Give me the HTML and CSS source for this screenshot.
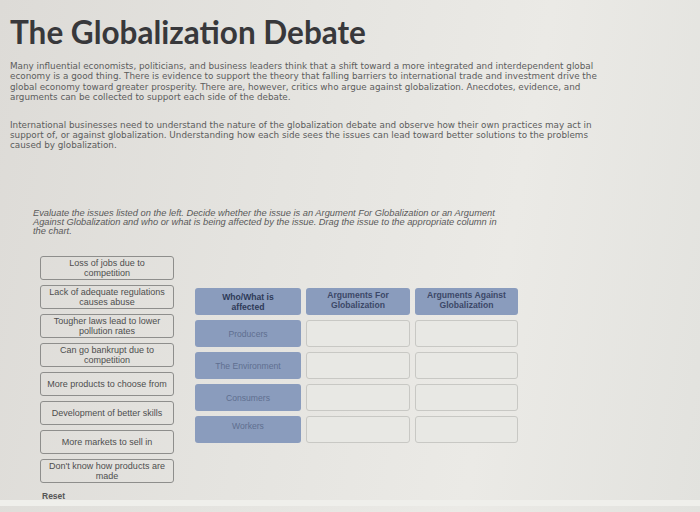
FILE: index.html
```html
<!DOCTYPE html>
<html>
<head>
<meta charset="utf-8">
<link rel="stylesheet" href="styles.css">
</head>
<body>
<div class="page">
  <h1 class="title">The Globalization Debate</h1>
  <p class="intro">Many influential economists, politicians, and business leaders think that a shift toward a more integrated and interdependent global<br>economy is a good thing. There is evidence to support the theory that falling barriers to international trade and investment drive the<br>global economy toward greater prosperity. There are, however, critics who argue against globalization. Anecdotes, evidence, and<br>arguments can be collected to support each side of the debate.</p>
  <p class="intro second">International businesses need to understand the nature of the globalization debate and observe how their own practices may act in<br>support of, or against globalization. Understanding how each side sees the issues can lead toward better solutions to the problems<br>caused by globalization.</p>
  <p class="instructions">Evaluate the issues listed on the left. Decide whether the issue is an Argument For Globalization or an Argument<br>Against Globalization and who or what is being affected by the issue. Drag the issue to the appropriate column in<br>the chart.</p>

  <div class="activity">
    <div class="issues">
      <div class="issue">Loss of jobs due to<br>competition</div>
      <div class="issue">Lack of adequate regulations<br>causes abuse</div>
      <div class="issue">Tougher laws lead to lower<br>pollution rates</div>
      <div class="issue">Can go bankrupt due to<br>competition</div>
      <div class="issue">More products to choose from</div>
      <div class="issue">Development of better skills</div>
      <div class="issue">More markets to sell in</div>
      <div class="issue">Don't know how products are<br>made</div>
      <div class="reset">Reset</div>
    </div>
    <div class="chart">
      <div class="head">Who/What is<br>affected</div>
      <div class="head top">Arguments For<br>Globalization</div>
      <div class="head top">Arguments Against<br>Globalization</div>

      <div class="label">Producers</div>
      <div class="drop"></div>
      <div class="drop"></div>

      <div class="label">The Environment</div>
      <div class="drop"></div>
      <div class="drop"></div>

      <div class="label">Consumers</div>
      <div class="drop"></div>
      <div class="drop"></div>

      <div class="label top">Workers</div>
      <div class="drop"></div>
      <div class="drop"></div>
    </div>
  </div>
</div>
</body>
</html>
```
FILE: styles.css
```css
html, body {
  margin: 0;
  padding: 0;
}
body {
  width: 700px;
  height: 512px;
  overflow: hidden;
  background: linear-gradient(100deg, #dddbd7 0%, #e5e4e0 40%, #ebeae6 70%, #e2e2de 100%);
  font-family: "Liberation Sans", Arial, sans-serif;
  color: #444;
}
.page {
  height: 506px;
  padding-left: 10px;
  box-sizing: border-box;
  border-bottom: 6px solid #efefeb;
}
.title {
  margin: 0;
  padding-top: 14px;
  font-family: Lato, "Liberation Sans", sans-serif;
  font-weight: 700;
  font-size: 31.5px;
  line-height: 36px;
  color: #38383b;
}
.intro {
  margin: 11px 0 0 0;
  font-family: "DejaVu Sans", Verdana, sans-serif;
  font-size: 8.8px;
  line-height: 10.4px;
  color: #5c5c5c;
  white-space: nowrap;
}
.intro.second {
  margin-top: 17px;
}
.instructions {
  margin: 58px 0 0 23px;
  font-family: "Liberation Sans", Arial, sans-serif;
  font-style: italic;
  font-size: 9.3px;
  line-height: 9.2px;
  color: #5a5a5a;
  white-space: nowrap;
}
.activity {
  display: flex;
  align-items: flex-start;
  margin-top: 20px;
  padding-left: 30px;
}
.issues {
  display: flex;
  flex-direction: column;
  gap: 5px;
  width: 134px;
}
.issue {
  height: 24px;
  box-sizing: border-box;
  border: 1px solid #8e8e8c;
  border-radius: 3px;
  display: flex;
  align-items: center;
  justify-content: center;
  text-align: center;
  font-size: 9px;
  line-height: 10.4px;
  color: #4e4e4e;
}
.reset {
  margin-top: 3px;
  font-size: 8.5px;
  font-weight: 700;
  color: #555;
  padding-left: 2px;
}
.chart {
  margin-left: 21px;
  margin-top: 32px;
  display: grid;
  grid-template-columns: 106px 104px 103px;
  grid-auto-rows: 27px;
  gap: 5px;
}
.head {
  background: #8a9cbd;
  border-radius: 3px;
  display: flex;
  align-items: center;
  justify-content: center;
  text-align: center;
  font-size: 8.6px;
  line-height: 10px;
  font-weight: 700;
  color: #2e3a58;
}
.head.top {
  align-items: flex-start;
  padding-top: 2px;
  color: #3c4868;
}
.label {
  background: #8a9cbd;
  border-radius: 3px;
  display: flex;
  align-items: center;
  justify-content: center;
  font-size: 8.6px;
  color: #5f6f90;
}
.label.top {
  align-items: flex-start;
  padding-top: 5px;
}
.drop {
  border: 1px solid #c8c8c4;
  border-radius: 3px;
  background: #e8e8e4;
}
```
